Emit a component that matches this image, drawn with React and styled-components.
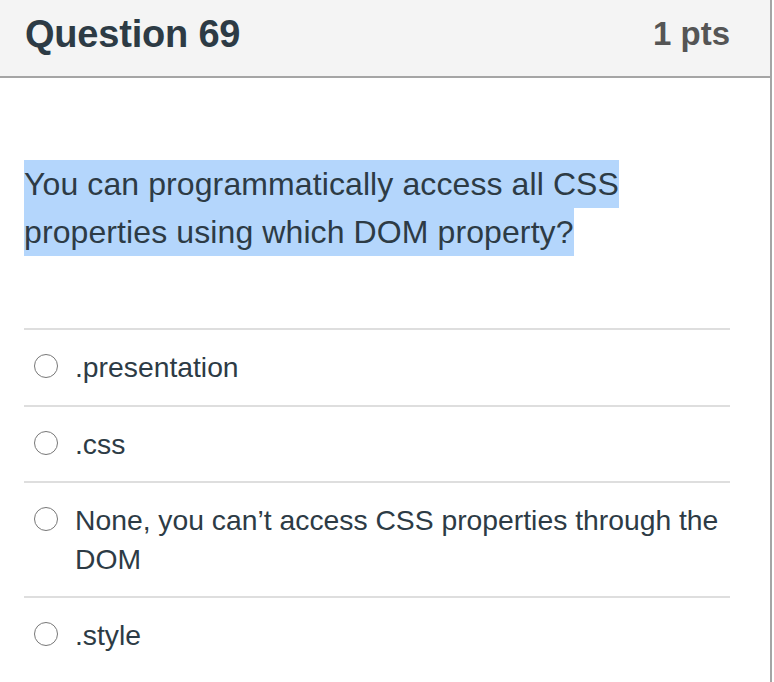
import React from 'react';
import styled, { createGlobalStyle } from 'styled-components';

const GlobalStyle = createGlobalStyle`
  html, body {
    margin: 0;
    padding: 0;
    background: #fff;
  }
  body {
    font-family: "Liberation Sans", Arial, sans-serif;
    color: #2d3b45;
  }
`;

const Card = styled.section`
  width: 770px;
  min-height: 682px;
  border-right: 2px solid #a5a5a5;
  background: #fff;
`;

const Header = styled.header`
  display: flex;
  align-items: center;
  justify-content: space-between;
  height: 68px;
  padding: 0 40px 8px 25px;
  background: #f4f4f4;
  border-bottom: 2px solid #a5a5a5;
`;

const Title = styled.h2`
  margin: 0;
  font-size: 38px;
  font-weight: 700;
  color: #2d3b45;
  letter-spacing: -0.2px;
`;

const Points = styled.span`
  font-size: 33px;
  font-weight: 700;
  color: #555;
`;

const Body = styled.div`
  padding: 82px 40px 0 24px;
`;

const Prompt = styled.p`
  margin: 0 0 72px;
  font-size: 32px;
  line-height: 48px;
  letter-spacing: 0.1px;
`;

const Selected = styled.span`
  background: #b4d6fc;
  padding: 6px 0;
  box-decoration-break: clone;
  -webkit-box-decoration-break: clone;
`;

const Answers = styled.ul`
  list-style: none;
  margin: 0;
  padding: 0;
`;

const Answer = styled.li`
  display: flex;
  align-items: flex-start;
  gap: 17px;
  padding: 18px 0 18px 10px;
  border-top: 2px solid #dedede;
  font-size: 28.3px;
  line-height: 38.5px;
`;

const Radio = styled.span`
  flex: none;
  box-sizing: border-box;
  width: 24px;
  height: 24px;
  margin-top: 6px;
  border: 1.5px solid #777;
  border-radius: 50%;
  background: #fff;
`;

const answers = [
  '.presentation',
  '.css',
  'None, you can\u2019t access CSS properties through the DOM',
  '.style',
];

export default function App() {
  return (
    <>
      <GlobalStyle />
      <Card>
        <Header>
          <Title>Question 69</Title>
          <Points>1 pts</Points>
        </Header>
        <Body>
          <Prompt>
            <Selected>
              You can programmatically access all CSS properties using which DOM property?
            </Selected>
          </Prompt>
          <Answers>
            {answers.map((text) => (
              <Answer key={text}>
                <Radio />
                <span>{text}</span>
              </Answer>
            ))}
          </Answers>
        </Body>
      </Card>
    </>
  );
}
